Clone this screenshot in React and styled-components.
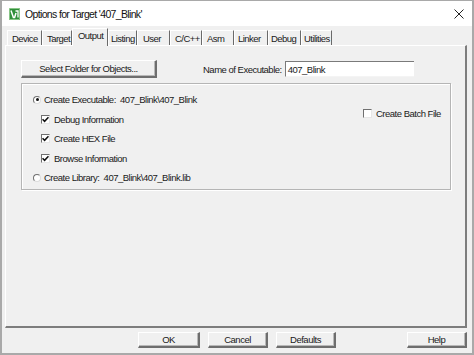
import React from "react";
import styled, { createGlobalStyle } from "styled-components";

const Global = createGlobalStyle`
  html, body { margin: 0; padding: 0; background: #f0f0f0; }
  body { font-family: "Liberation Sans", Arial, sans-serif; }
  * { box-sizing: border-box; }
`;

const Window = styled.div`
  width: 474px;
  height: 355px;
  display: flex;
  flex-direction: column;
  background: #f0f0f0;
  border: 2px solid #a9a9a9;
  border-top: 1px solid #a9a9a9;
  color: #1a1a1a;
  font-family: "Liberation Sans", Arial, sans-serif;
  font-size: 9.5px;
  letter-spacing: -0.5px;
`;

const TitleBar = styled.div`
  height: 25px;
  flex: none;
  background: #ffffff;
  display: flex;
  align-items: center;
  padding: 0 8px 0 7px;
  gap: 5px;
`;

const Title = styled.div`
  flex: 1;
  font-size: 10.5px;
  letter-spacing: -0.65px;
  color: #111;
  padding-top: 1px;
`;

const Body = styled.div`
  flex: 1;
  display: flex;
  flex-direction: column;
  padding: 3px 5px 0 3px;
`;

const TabStrip = styled.div`
  height: 17px;
  display: flex;
  align-items: flex-end;
  padding-left: 2px;
  position: relative;
  z-index: 1;
  margin-bottom: -1px;
`;

const Tab = styled.div`
  width: ${(p) => p.$w}px;
  height: ${(p) => (p.$active ? 18 : 15)}px;
  padding-left: ${(p) => p.$pl}px;
  display: flex;
  align-items: center;
  white-space: nowrap;
  overflow: hidden;
  letter-spacing: -0.55px;
  border-top: 1px solid #ffffff;
  border-left: 1px solid #ffffff;
  border-right: 1px solid #6a6a6a;
  background: #f0f0f0;
  padding-bottom: ${(p) => (p.$active ? 4 : 0)}px;
  margin-bottom: ${(p) => (p.$active ? 0 : 1)}px;
`;

const Panel = styled.div`
  height: 283px;
  display: flex;
  flex-direction: column;
  border-top: 1px solid #ffffff;
  border-left: 1px solid #ffffff;
  border-right: 2px solid #7d7d7d;
  border-bottom: 2px solid #7d7d7d;
  padding: 14px 14px 0 15px;
`;

const TopRow = styled.div`
  display: flex;
  align-items: center;
  height: 18px;
`;

const Button = styled.button`
  width: ${(p) => p.$w}px;
  height: ${(p) => p.$h || 16}px;
  padding: 0;
  font: inherit;
  letter-spacing: inherit;
  color: #1a1a1a;
  background: #f0f0f0;
  border-top: 1px solid #ffffff;
  border-left: 1px solid #ffffff;
  border-right: 2px solid #6e6e6e;
  border-bottom: 2px solid #6e6e6e;
  box-shadow: inset -1px -1px 0 #b8b8b8;
  display: flex;
  align-items: center;
  justify-content: center;
`;

const Label = styled.span`
  margin-left: 46px;
  margin-right: 3px;
  white-space: nowrap;
`;

const TextBox = styled.div`
  width: 129px;
  height: 16px;
  background: #ffffff;
  border-top: 1px solid #7a7a7a;
  border-left: 1px solid #7a7a7a;
  border-bottom: 1px solid #f4f4f4;
  padding: 1px 2px;
  display: flex;
  align-items: center;
`;

const Group = styled.div`
  margin-top: 5px;
  height: 107px;
  border: 1px solid #b5b5b5;
  box-shadow: 1px 1px 0 #ffffff, inset 1px 1px 0 #ffffff;
  display: flex;
  padding: 6px 0 0 11px;
`;

const LeftCol = styled.div`
  flex: 1;
  display: flex;
  flex-direction: column;
`;

const RightCol = styled.div`
  width: 87px;
  padding-top: 14px;
`;

const Option = styled.div`
  height: 19.5px;
  display: flex;
  align-items: center;
  gap: ${(p) => p.$gap || 4}px;
  padding-left: ${(p) => p.$indent || 0}px;
  white-space: nowrap;
`;

const Box = styled.span`
  width: 9px;
  height: 9px;
  flex: none;
  background: #ffffff;
  border-top: 1px solid #707070;
  border-left: 1px solid #707070;
  border-right: 1px solid #e6e6e6;
  border-bottom: 1px solid #e6e6e6;
  display: flex;
  align-items: center;
  justify-content: center;
`;

const Radio = styled.span`
  width: 8px;
  height: 8px;
  flex: none;
  border-radius: 50%;
  background: #ffffff;
  border-top: 1px solid #707070;
  border-left: 1px solid #707070;
  border-right: 1px solid #dcdcdc;
  border-bottom: 1px solid #dcdcdc;
  display: flex;
  align-items: center;
  justify-content: center;
  &::after {
    content: "";
    width: 3px;
    height: 3px;
    border-radius: 50%;
    background: ${(p) => (p.$on ? "#111" : "transparent")};
  }
`;

const Footer = styled.div`
  flex: 1;
  display: flex;
  align-items: center;
  padding: 0 0 2px 133px;
  gap: 8px;
`;

const Spacer = styled.div`
  flex: 1;
`;

function Check({ on }) {
  return (
    <Box>
      {on && (
        <svg width="7" height="7" viewBox="0 0 7 7">
          <path d="M0.5 3.2 L2.6 5.3 L6.5 1.2" fill="none" stroke="#111" strokeWidth="1.6" />
        </svg>
      )}
    </Box>
  );
}

function AppIcon() {
  return (
    <svg width="11" height="12" viewBox="0 0 11 12">
      <rect x="0" y="0" width="11" height="12" fill="#2f8f3a" />
      <rect x="0.5" y="0.5" width="10" height="11" fill="none" stroke="#9fd39b" strokeWidth="0.8" />
      <path d="M2 2.5 L4.4 9.5 L5.6 9.5 L7 5" fill="none" stroke="#ffffff" strokeWidth="1.5" />
      <path d="M6.5 3 L9 3 L9 9.5" fill="none" stroke="#ffffff" strokeWidth="1.3" />
    </svg>
  );
}

function CloseIcon() {
  return (
    <svg width="10" height="10" viewBox="0 0 10 10">
      <path d="M0.5 0.5 L9.5 9.5 M9.5 0.5 L0.5 9.5" stroke="#222" strokeWidth="1" />
    </svg>
  );
}

const tabs = [
  ["Device", 35, 4],
  ["Target", 30, 4],
  ["Output", 36, 5, true],
  ["Listing", 29, 2],
  ["User", 33, 5],
  ["C/C++", 32, 4],
  ["Asm", 32, 4],
  ["Linker", 34, 3],
  ["Debug", 33, 2],
  ["Utilities", 31, 2],
];

export default function App() {
  return (
    <>
      <Global />
      <Window>
        <TitleBar>
          <AppIcon />
          <Title>Options for Target '407_Blink'</Title>
          <CloseIcon />
        </TitleBar>
        <Body>
          <TabStrip>
            {tabs.map(([t, w, pl, a]) => (
              <Tab key={t} $w={w} $pl={pl} $active={a}>
                {t}
              </Tab>
            ))}
          </TabStrip>
          <Panel>
            <TopRow>
              <Button $w={136} $h={18}>Select Folder for Objects...</Button>
              <Label>Name of Executable:</Label>
              <TextBox>407_Blink</TextBox>
            </TopRow>
            <Group>
              <LeftCol>
                <Option $gap={3}>
                  <Radio $on />
                  <span>Create Executable:&nbsp; 407_Blink\407_Blink</span>
                </Option>
                <Option $indent={8}>
                  <Check on />
                  <span>Debug Information</span>
                </Option>
                <Option $indent={8}>
                  <Check on />
                  <span>Create HEX File</span>
                </Option>
                <Option $indent={8}>
                  <Check on />
                  <span>Browse Information</span>
                </Option>
                <Option $gap={3}>
                  <Radio />
                  <span>Create Library:&nbsp; 407_Blink\407_Blink.lib</span>
                </Option>
              </LeftCol>
              <RightCol>
                <Option>
                  <Check />
                  <span>Create Batch File</span>
                </Option>
              </RightCol>
            </Group>
          </Panel>
          <Footer>
            <Button $w={62}>OK</Button>
            <Button $w={60}>Cancel</Button>
            <Button $w={60}>Defaults</Button>
            <Spacer />
            <Button $w={60}>Help</Button>
          </Footer>
        </Body>
      </Window>
    </>
  );
}
